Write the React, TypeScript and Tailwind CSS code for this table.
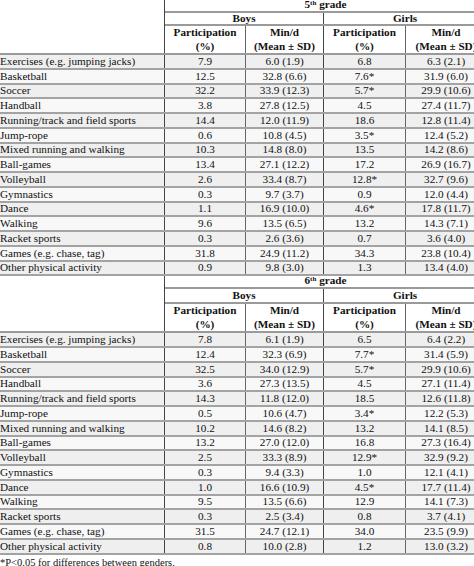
import React from "react"

type Row = [string, string, string, string, string]

const grade5: Row[] = [
  ["Exercises (e.g. jumping jacks)", "7.9", "6.0 (1.9)", "6.8", "6.3 (2.1)"],
  ["Basketball", "12.5", "32.8 (6.6)", "7.6*", "31.9 (6.0)"],
  ["Soccer", "32.2", "33.9 (12.3)", "5.7*", "29.9 (10.6)"],
  ["Handball", "3.8", "27.8 (12.5)", "4.5", "27.4 (11.7)"],
  ["Running/track and field sports", "14.4", "12.0 (11.9)", "18.6", "12.8 (11.4)"],
  ["Jump-rope", "0.6", "10.8 (4.5)", "3.5*", "12.4 (5.2)"],
  ["Mixed running and walking", "10.3", "14.8 (8.0)", "13.5", "14.2 (8.6)"],
  ["Ball-games", "13.4", "27.1 (12.2)", "17.2", "26.9 (16.7)"],
  ["Volleyball", "2.6", "33.4 (8.7)", "12.8*", "32.7 (9.6)"],
  ["Gymnastics", "0.3", "9.7 (3.7)", "0.9", "12.0 (4.4)"],
  ["Dance", "1.1", "16.9 (10.0)", "4.6*", "17.8 (11.7)"],
  ["Walking", "9.6", "13.5 (6.5)", "13.2", "14.3 (7.1)"],
  ["Racket sports", "0.3", "2.6 (3.6)", "0.7", "3.6 (4.0)"],
  ["Games (e.g. chase, tag)", "31.8", "24.9 (11.2)", "34.3", "23.8 (10.4)"],
  ["Other physical activity", "0.9", "9.8 (3.0)", "1.3", "13.4 (4.0)"],
]

const grade6: Row[] = [
  ["Exercises (e.g. jumping jacks)", "7.8", "6.1 (1.9)", "6.5", "6.4 (2.2)"],
  ["Basketball", "12.4", "32.3 (6.9)", "7.7*", "31.4 (5.9)"],
  ["Soccer", "32.5", "34.0 (12.9)", "5.7*", "29.9 (10.6)"],
  ["Handball", "3.6", "27.3 (13.5)", "4.5", "27.1 (11.4)"],
  ["Running/track and field sports", "14.3", "11.8 (12.0)", "18.5", "12.6 (11.8)"],
  ["Jump-rope", "0.5", "10.6 (4.7)", "3.4*", "12.2 (5.3)"],
  ["Mixed running and walking", "10.2", "14.6 (8.2)", "13.2", "14.1 (8.5)"],
  ["Ball-games", "13.2", "27.0 (12.0)", "16.8", "27.3 (16.4)"],
  ["Volleyball", "2.5", "33.3 (8.9)", "12.9*", "32.9 (9.2)"],
  ["Gymnastics", "0.3", "9.4 (3.3)", "1.0", "12.1 (4.1)"],
  ["Dance", "1.0", "16.6 (10.9)", "4.5*", "17.7 (11.4)"],
  ["Walking", "9.5", "13.5 (6.6)", "12.9", "14.1 (7.3)"],
  ["Racket sports", "0.3", "2.5 (3.4)", "0.8", "3.7 (4.1)"],
  ["Games (e.g. chase, tag)", "31.5", "24.7 (12.1)", "34.0", "23.5 (9.9)"],
  ["Other physical activity", "0.8", "10.0 (2.8)", "1.2", "13.0 (3.2)"],
]

function Header({ grade, top }: { grade: string; top: boolean }) {
  return (
    <div className={`flex border-b-2 border-[#9a9a9a] ${top ? "h-[55px]" : "h-[57px]"}`}>
      <div className="w-[165px] shrink-0 border-r border-[#444]" />
      <div className="flex flex-col w-[321px] shrink-0 font-bold">
        <div className="flex h-[13px] items-end justify-center pb-[1px] border-b-2 border-[#9a9a9a]">
          <span className="leading-none">
            {grade}
            <span className="relative -top-[3px] text-[7px]">th</span> grade
          </span>
        </div>
        <div className="flex h-[15px] border-b-2 border-[#9a9a9a]">
          <div className="w-[159px] flex items-center justify-center border-r border-[#444]">Boys</div>
          <div className="w-[162px] flex items-center justify-center">Girls</div>
        </div>
        <div className="flex flex-1">
          <div className="w-[81px] flex flex-col items-center justify-center leading-[13.5px] border-r border-[#666]">
            <span>Participation</span>
            <span>(%)</span>
          </div>
          <div className="w-[78px] flex flex-col items-center justify-center leading-[13.5px] border-r border-[#444]">
            <span>Min/d</span>
            <span>(Mean ± SD)</span>
          </div>
          <div className="w-[82px] flex flex-col items-center justify-center leading-[13.5px] border-r border-[#666]">
            <span>Participation</span>
            <span>(%)</span>
          </div>
          <div className="w-[80px] flex flex-col items-center justify-center leading-[13.5px]">
            <span>Min/d</span>
            <span>(Mean ± SD)</span>
          </div>
        </div>
      </div>
    </div>
  )
}

function DataRows({ rows }: { rows: Row[] }) {
  return (
    <div>
      {rows.map((r, i) => (
        <div
          key={r[0]}
          className={`flex h-[14.75px] border-b-2 border-[#a3a3a3] ${i % 2 === 0 ? "bg-[#efefef]" : "bg-[#f8f8f8]"}`}
        >
          <div className="w-[165px] shrink-0 flex items-center whitespace-nowrap border-r border-[#444]">{r[0]}</div>
          <div className="w-[81px] shrink-0 flex items-center justify-center border-r border-[#666]">{r[1]}</div>
          <div className="w-[78px] shrink-0 flex items-center justify-center border-r border-[#444]">{r[2]}</div>
          <div className="w-[82px] shrink-0 flex items-center justify-center border-r border-[#666]">{r[3]}</div>
          <div className="w-[80px] shrink-0 flex items-center justify-center">{r[4]}</div>
        </div>
      ))}
    </div>
  )
}

export default function App() {
  return (
    <div className="w-[474px] h-[566px] overflow-hidden bg-white text-[#111] font-['Liberation_Serif',serif] text-[11.2px] leading-none">
      <div className="w-[486px]">
        <Header grade="5" top />
        <DataRows rows={grade5} />
        <Header grade="6" top={false} />
        <DataRows rows={grade6} />
        <p className="pt-[3px] text-[10.5px]">*P&lt;0.05 for differences between genders.</p>
      </div>
    </div>
  )
}
